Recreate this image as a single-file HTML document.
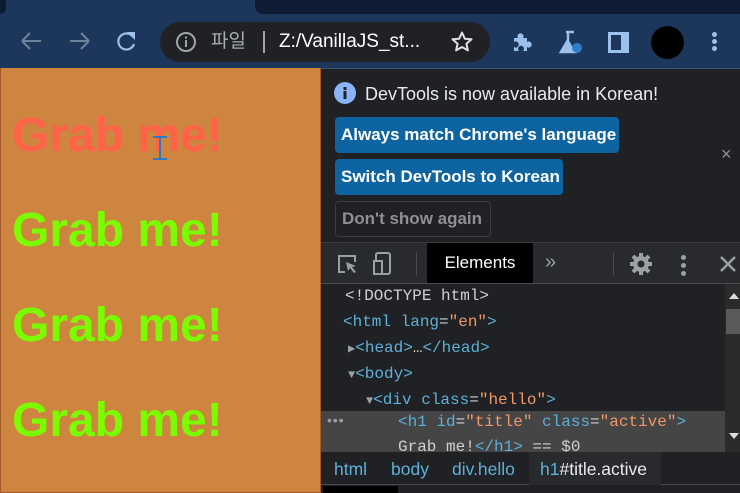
<!DOCTYPE html>
<html><head><style>
*{margin:0;padding:0;box-sizing:border-box}
body{width:740px;height:493px;overflow:hidden;background:#1c365c;font-family:"Liberation Sans","Noto Sans CJK KR",sans-serif;position:relative}
.a{position:absolute;white-space:nowrap}
.mono{font-family:"Liberation Mono",monospace;font-size:16px;white-space:pre}
.t{color:#5db0d7}.v{color:#f29766}.g{color:#cfd0d0}
</style></head><body>
<div class="a" style="left:0;top:0;width:740px;height:14px;background:#1c365c"></div>
<div class="a" style="left:255px;top:0;width:485px;height:14px;background:#0e1c33;border-bottom-left-radius:8px"></div>
<div class="a" style="left:0;top:0;width:6px;height:14px;background:#0e1c33;border-bottom-right-radius:6px"></div>
<svg class="a" style="left:18px;top:28px" width="120" height="26" viewBox="0 0 120 26">
<path d="M4 13H23M4 13L12 5M4 13L12 21" stroke="#6f819b" stroke-width="2" fill="none"/>
<path d="M52 13H71M71 13L63 5M71 13L63 21" stroke="#6f819b" stroke-width="2" fill="none"/>
<path d="M115 9A8 8 0 1 0 116 16" stroke="#9cc0ec" stroke-width="2.2" fill="none"/>
<path d="M109 4L117 4L117 12Z" fill="#9cc0ec"/>
</svg>
<div class="a" style="left:160px;top:22px;width:330px;height:40px;background:#202124;border-radius:20px"></div>
<svg class="a" style="left:175px;top:31px" width="22" height="22"><circle cx="11" cy="11" r="9" stroke="#a0a4a8" stroke-width="2" fill="none"/><rect x="10" y="9" width="2" height="7" fill="#a0a4a8"/><rect x="10" y="5.5" width="2" height="2" fill="#a0a4a8"/></svg>
<div class="a" style="left:211px;top:30px;font-size:19px;color:#a8acb0;line-height:24px">파일</div>
<div class="a" style="left:263px;top:31px;width:2px;height:22px;background:#a0a4a8"></div>
<div class="a" style="left:279px;top:30px;font-size:19px;color:#fff;line-height:24px">Z:/VanillaJS_st...</div>
<svg class="a" style="left:450px;top:30px" width="24" height="24" viewBox="0 0 24 24"><path d="M12 2.5l2.8 6.2 6.7.6-5.1 4.5 1.5 6.6L12 17l-5.9 3.4 1.5-6.6-5.1-4.5 6.7-.6z" stroke="#dfe1e5" stroke-width="2" fill="none" stroke-linejoin="round"/></svg>
<svg class="a" style="left:510px;top:30px" width="24" height="24" viewBox="0 0 24 24"><path d="M4 8h4a3 3 0 1 1 5 0h4v4a3 3 0 1 1 0 5v4h-4a3 3 0 1 0-4 0H4v-4a3 3 0 1 0 0-5z" fill="#9cc0ec"/></svg>
<svg class="a" style="left:558px;top:30px" width="28" height="26" viewBox="0 0 28 26"><path d="M8 2h8M10 2v8L3 22h16" fill="none" stroke="#9cc0ec" stroke-width="2.5"/><path d="M10 9L3 22h14l-4-8z" fill="#9cc0ec"/><circle cx="19" cy="18" r="5" fill="#2f7ed0"/></svg>
<div class="a" style="left:608px;top:32px;width:21px;height:21px;border:3px solid #9cc0ec;border-right-width:8px"></div>
<div class="a" style="left:651px;top:26px;width:33px;height:33px;border-radius:50%;background:#000"></div>
<div class="a" style="left:712px;top:32px;width:5px;height:5px;border-radius:50%;background:#9cc0ec;box-shadow:0 7px 0 #9cc0ec,0 14px 0 #9cc0ec"></div>
<div class="a" style="left:0;top:68px;width:321px;height:425px;background:#cd853f;border:1px solid #a55a2a;border-top:none"></div>
<div class="a" style="left:12px;top:108px;font-size:48px;font-weight:bold;line-height:56px;color:#ff6347">Grab me!</div>
<div class="a" style="left:12px;top:203px;font-size:48px;font-weight:bold;line-height:56px;color:#7cfc00">Grab me!</div>
<div class="a" style="left:12px;top:298px;font-size:48px;font-weight:bold;line-height:56px;color:#7cfc00">Grab me!</div>
<div class="a" style="left:12px;top:393px;font-size:48px;font-weight:bold;line-height:56px;color:#7cfc00">Grab me!</div>
<div class="a" style="left:159px;top:136px;width:2px;height:24px;background:#3078c8"></div>
<div class="a" style="left:153px;top:136px;width:14px;height:2px;background:#3078c8"></div>
<div class="a" style="left:153px;top:158px;width:14px;height:2px;background:#3078c8"></div>
<div class="a" style="left:321px;top:68px;width:419px;height:425px;background:#202124"></div>
<div class="a" style="left:321px;top:68px;width:419px;height:1px;background:#3c5070"></div>
<svg class="a" style="left:334px;top:82px" width="22" height="22"><circle cx="11" cy="11" r="11" fill="#8ab4f8"/><rect x="9.5" y="9" width="3" height="8" fill="#202124"/><rect x="9.5" y="5" width="3" height="3" fill="#202124"/></svg>
<div class="a" style="left:365px;top:83px;font-size:18px;color:#e8eaed;line-height:22px">DevTools is now available in Korean!</div>
<div class="a" style="left:335px;top:117px;width:284px;height:36px;background:#0e64a0;border-radius:4px;color:#fff;font-weight:bold;font-size:17px;line-height:36px;padding-left:6px">Always match Chrome's language</div>
<div class="a" style="left:335px;top:159px;width:228px;height:36px;background:#0e64a0;border-radius:4px;color:#fff;font-weight:bold;font-size:17px;line-height:36px;padding-left:6px">Switch DevTools to Korean</div>
<div class="a" style="left:335px;top:201px;width:156px;height:36px;border:1px solid #3c3d40;border-radius:4px;color:#8e9093;font-weight:bold;font-size:17px;line-height:34px;padding-left:6px">Don't show again</div>
<div class="a" style="left:721px;top:144px;font-size:18px;color:#8e9093">×</div>
<div class="a" style="left:321px;top:242px;width:419px;height:1px;background:#3c3d40"></div>
<div class="a" style="left:321px;top:243px;width:419px;height:41px;background:#292a2d;border-bottom:1px solid #494c50"></div>
<svg class="a" style="left:336px;top:252px" width="60" height="24" viewBox="0 0 60 24"><path d="M9 20H3V4h16v6" fill="none" stroke="#9aa0a6" stroke-width="2"/><path d="M10 10l10 4-4 1 4 5-2 1-4-5-2 3z" fill="#9aa0a6"/><rect x="40" y="1" width="14" height="21" rx="2" fill="none" stroke="#9aa0a6" stroke-width="2"/><rect x="38" y="9" width="8" height="13" fill="#292a2d" stroke="#9aa0a6" stroke-width="2"/></svg>
<div class="a" style="left:416px;top:252px;width:1px;height:24px;background:#494c50"></div>
<div class="a" style="left:427px;top:243px;width:106px;height:40px;background:#000;color:#fff;font-size:17px;line-height:40px;text-align:center">Elements</div>
<div class="a" style="left:545px;top:251px;font-size:20px;color:#9aa0a6">»</div>
<div class="a" style="left:613px;top:252px;width:1px;height:24px;background:#494c50"></div>
<svg class="a" style="left:629px;top:252px" width="24" height="24" viewBox="0 0 24 24"><circle cx="12" cy="12" r="8" fill="#9aa0a6"/><g stroke="#9aa0a6" stroke-width="4"><path d="M12 1v22M1 12h22M4 4l16 16M20 4L4 20"/></g><circle cx="12" cy="12" r="3.5" fill="#292a2d"/></svg>
<div class="a" style="left:681px;top:255px;width:5px;height:5px;border-radius:50%;background:#9aa0a6;box-shadow:0 8px 0 #9aa0a6,0 16px 0 #9aa0a6"></div>
<svg class="a" style="left:719px;top:255px" width="18" height="18"><path d="M2 2L16 16M16 2L2 16" stroke="#9aa0a6" stroke-width="2.5"/></svg>
<div class="a" style="left:321px;top:411px;width:404px;height:41px;background:#454545"></div>
<div class="a mono g" style="left:345px;top:283px;line-height:26px">&lt;!DOCTYPE html&gt;</div>
<div class="a mono" style="left:343px;top:309px;line-height:26px"><span class="t">&lt;html </span><span class="t">lang</span><span class="g">=</span><span class="v">"en"</span><span class="t">&gt;</span></div>
<div class="a mono" style="left:348px;top:335px;line-height:26px"><span style="color:#9aa0a6;font-size:12px">▶</span><span class="t">&lt;head&gt;</span><span class="g">…</span><span class="t">&lt;/head&gt;</span></div>
<div class="a mono" style="left:348px;top:361px;line-height:26px"><span style="color:#9aa0a6;font-size:12px">▼</span><span class="t">&lt;body&gt;</span></div>
<div class="a mono" style="left:366px;top:387px;line-height:26px"><span style="color:#9aa0a6;font-size:12px">▼</span><span class="t">&lt;div </span><span class="t">class</span><span class="g">=</span><span class="v">"hello"</span><span class="t">&gt;</span></div>
<div class="a" style="left:327px;top:412px;color:#9aa0a6;font-size:14px;letter-spacing:1px">•••</div>
<div class="a mono" style="left:398px;top:412px;line-height:20px"><span class="t">&lt;h1 </span><span class="t">id</span><span class="g">=</span><span class="v">"title"</span><span class="t"> class</span><span class="g">=</span><span class="v">"active"</span><span class="t">&gt;</span></div>
<div class="a mono g" style="left:398px;top:437px;line-height:20px;height:15px;overflow:hidden">Grab me!<span class="t">&lt;/h1&gt;</span> == $0</div>
<div class="a" style="left:725px;top:284px;width:15px;height:168px;background:#2b2b2b"></div>
<div class="a" style="left:726px;top:309px;width:14px;height:25px;background:#5a5a5a"></div>
<div class="a" style="left:729px;top:293px;border:5px solid transparent;border-bottom:6px solid #ddd;border-top:none"></div>
<div class="a" style="left:729px;top:433px;border:5px solid transparent;border-top:6px solid #ddd;border-bottom:none"></div>
<div class="a" style="left:321px;top:452px;width:419px;height:33px;background:#202124;border-bottom:1px solid #494c50"></div>
<div class="a" style="left:529px;top:452px;width:132px;height:33px;background:#292a2d"></div>
<div class="a" style="left:334px;top:458px;font-size:17.5px;line-height:22px;color:#5db0d7">html</div>
<div class="a" style="left:391px;top:458px;font-size:17.5px;line-height:22px;color:#5db0d7">body</div>
<div class="a" style="left:452px;top:458px;font-size:17.5px;line-height:22px;color:#5db0d7">div.hello</div>
<div class="a" style="left:540px;top:458px;font-size:17.5px;line-height:22px;color:#5db0d7">h1<span style="color:#e8eaed">#title.active</span></div>
<div class="a" style="left:323px;top:486px;width:75px;height:7px;background:#000"></div>
</body></html>
